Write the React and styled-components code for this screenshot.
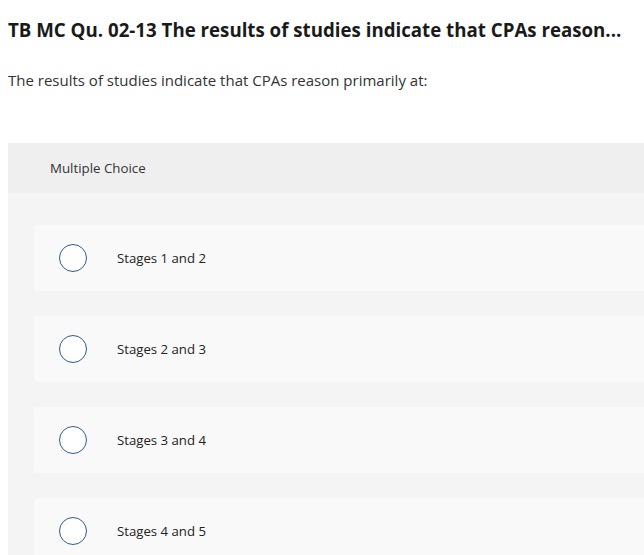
import React from 'react';
import styled, { createGlobalStyle } from 'styled-components';

const GlobalStyle = createGlobalStyle`
  html, body {
    margin: 0;
    padding: 0;
    background: #fff;
    overflow: hidden;
  }
  body {
    font-family: "Open Sans", Lato, Arial, sans-serif;
    color: #222;
  }
`;

const Page = styled.div`
  padding: 0 0 0 8px;
  width: 700px;
`;

const Title = styled.h2`
  margin: 0;
  padding-top: 18px;
  font-size: 18.7px;
  font-weight: 700;
  line-height: 24px;
  color: #1a1a1a;
  white-space: nowrap;
`;

const Prompt = styled.p`
  margin: 28px 0 0;
  font-size: 15px;
  line-height: 20px;
  color: #333;
`;

const Panel = styled.section`
  margin-top: 53px;
  background: #f4f4f4;
`;

const PanelHeader = styled.div`
  height: 50px;
  display: flex;
  align-items: center;
  padding-left: 42px;
  background: #efefef;
  font-size: 13.3px;
  color: #333;
`;

const Choices = styled.div`
  display: flex;
  flex-direction: column;
  gap: 25px;
  padding: 32px 0 30px 26px;
`;

const Choice = styled.label`
  display: flex;
  align-items: center;
  gap: 30px;
  height: 66px;
  padding-left: 25px;
  background: #f9f9f9;
  border-radius: 3px;
  font-size: 13.2px;
  color: #222;
  cursor: pointer;
`;

const Radio = styled.span`
  box-sizing: border-box;
  width: 28px;
  height: 28px;
  border-radius: 50%;
  border: 1.5px solid #2f5d8c;
  background: #fff;
  flex-shrink: 0;
`;

const options = ['Stages 1 and 2', 'Stages 2 and 3', 'Stages 3 and 4', 'Stages 4 and 5'];

export default function App() {
  return (
    <Page>
      <GlobalStyle />
      <Title>TB MC Qu. 02-13 The results of studies indicate that CPAs reason...</Title>
      <Prompt>The results of studies indicate that CPAs reason primarily at:</Prompt>
      <Panel>
        <PanelHeader>Multiple Choice</PanelHeader>
        <Choices>
          {options.map(opt => (
            <Choice key={opt}>
              <Radio />
              {opt}
            </Choice>
          ))}
        </Choices>
      </Panel>
    </Page>
  );
}
